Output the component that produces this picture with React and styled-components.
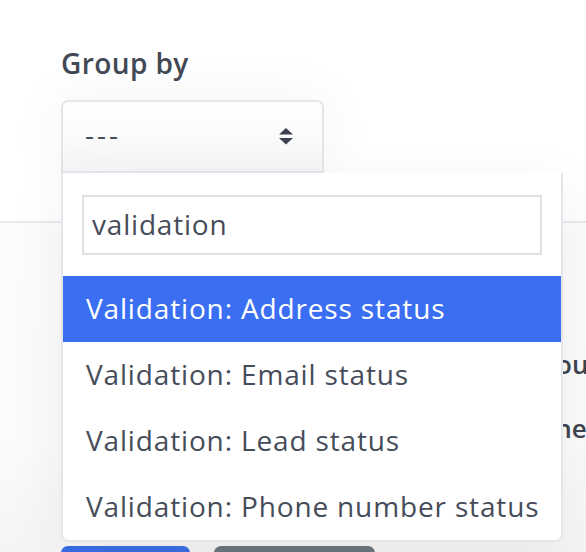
import React from "react";
import styled, { createGlobalStyle } from "styled-components";

const GlobalStyle = createGlobalStyle`
  html, body {
    margin: 0;
    padding: 0;
    background: #ffffff;
  }
  body {
    font-family: "Open Sans", "Liberation Sans", sans-serif;
    color: #464c59;
    overflow: hidden;
  }
`;

const Page = styled.div`
  width: 586px;
  height: 552px;
  overflow: hidden;
  display: flex;
  flex-direction: column;
  background: #ffffff;
`;

const TopSection = styled.section`
  padding: 43px 0 48px 61px;
  border-bottom: 2px solid #e8eaed;
`;

const Label = styled.div`
  font-size: 28px;
  font-weight: 600;
  line-height: 40px;
  letter-spacing: 0.4px;
  color: #434955;
  margin: 0 0 17px;
`;

const SelectField = styled.div`
  position: relative;
  width: 263px;
  height: 73px;
  box-sizing: border-box;
  border: 2px solid #e3e6ea;
  border-radius: 7px 7px 0 0;
  background: linear-gradient(#ffffff, #f5f6f7);
  display: flex;
  align-items: center;
  justify-content: space-between;
  padding: 0 29px 0 22px;
  box-shadow: 0 0 60px rgba(0, 0, 0, 0.05);
`;

const SelectValue = styled.span`
  font-size: 28px;
  line-height: 28px;
  letter-spacing: 3px;
  padding-bottom: 5px;
  color: #464c59;
`;

const Dropdown = styled.div`
  position: absolute;
  top: calc(100% + 2px);
  left: -2px;
  width: 502px;
  box-sizing: border-box;
  border: 2px solid #e3e7ec;
  border-top: none;
  border-radius: 0 0 7px 7px;
  background: #ffffff;
  padding-top: 22px;
  z-index: 10;
  box-shadow: 0 14px 60px rgba(0, 0, 0, 0.06);
`;

const SearchInput = styled.input`
  display: block;
  box-sizing: border-box;
  width: calc(100% - 38px);
  height: 60px;
  margin: 0 19px 21px;
  border: 2px solid #dee2e6;
  border-radius: 0;
  padding: 0 8px 3px;
  font-family: inherit;
  font-size: 28px;
  letter-spacing: 0.8px;
  color: #464c59;
  background: #ffffff;
  outline: none;
`;

const OptionList = styled.ul`
  list-style: none;
  margin: 0;
  padding: 0;
`;

const Option = styled.li`
  height: 66px;
  box-sizing: border-box;
  display: flex;
  align-items: center;
  padding: 0 0 3px 23px;
  font-size: 28px;
  letter-spacing: 0.85px;
  white-space: nowrap;
  color: ${(p) => (p.$active ? "#ffffff" : "#464c59")};
  background: ${(p) => (p.$active ? "#3b6ff3" : "transparent")};
`;

const LowerSection = styled.section`
  flex: 1;
  padding: 123px 0 0 61px;
  background: linear-gradient(#fcfcfc, #fbfbfb 60%, #f2f2f3);
  display: flex;
  flex-direction: column;
`;

const FieldRow = styled.div`
  height: 36px;
  line-height: 36px;
  padding-left: ${(p) => p.$indent}px;
  font-size: 26px;
  font-weight: 600;
  color: #3f4451;
  white-space: nowrap;
  margin-bottom: ${(p) => p.$gap || 0}px;
`;

const ButtonRow = styled.div`
  display: flex;
  gap: 24px;
`;

const Button = styled.div`
  width: ${(p) => p.$w}px;
  height: 44px;
  border-radius: 7px;
  background: ${(p) => (p.$variant === "primary" ? "#3a6ee6" : "#6c757d")};
`;

const SortIcon = () => (
  <svg width="14" height="17" viewBox="0 0 14 17" aria-hidden="true">
    <polygon points="7,0 14,6.5 0,6.5" fill="#3d4250" />
    <polygon points="0,10 14,10 7,16.5" fill="#3d4250" />
  </svg>
);

const options = [
  "Validation: Address status",
  "Validation: Email status",
  "Validation: Lead status",
  "Validation: Phone number status",
];

export default function App() {
  return (
    <Page>
      <GlobalStyle />
      <TopSection>
        <Label>Group by</Label>
        <SelectField>
          <SelectValue>---</SelectValue>
          <SortIcon />
          <Dropdown>
            <SearchInput defaultValue="validation" />
            <OptionList>
              {options.map((o, i) => (
                <Option key={o} $active={i === 0}>
                  {o}
                </Option>
              ))}
            </OptionList>
          </Dropdown>
        </SelectField>
      </TopSection>
      <LowerSection>
        <FieldRow $indent={465} $gap={28}>Group subtotals</FieldRow>
        <FieldRow $indent={458} $gap={100}>None</FieldRow>
        <ButtonRow>
          <Button $variant="primary" $w={129} />
          <Button $variant="secondary" $w={161} />
        </ButtonRow>
      </LowerSection>
    </Page>
  );
}
